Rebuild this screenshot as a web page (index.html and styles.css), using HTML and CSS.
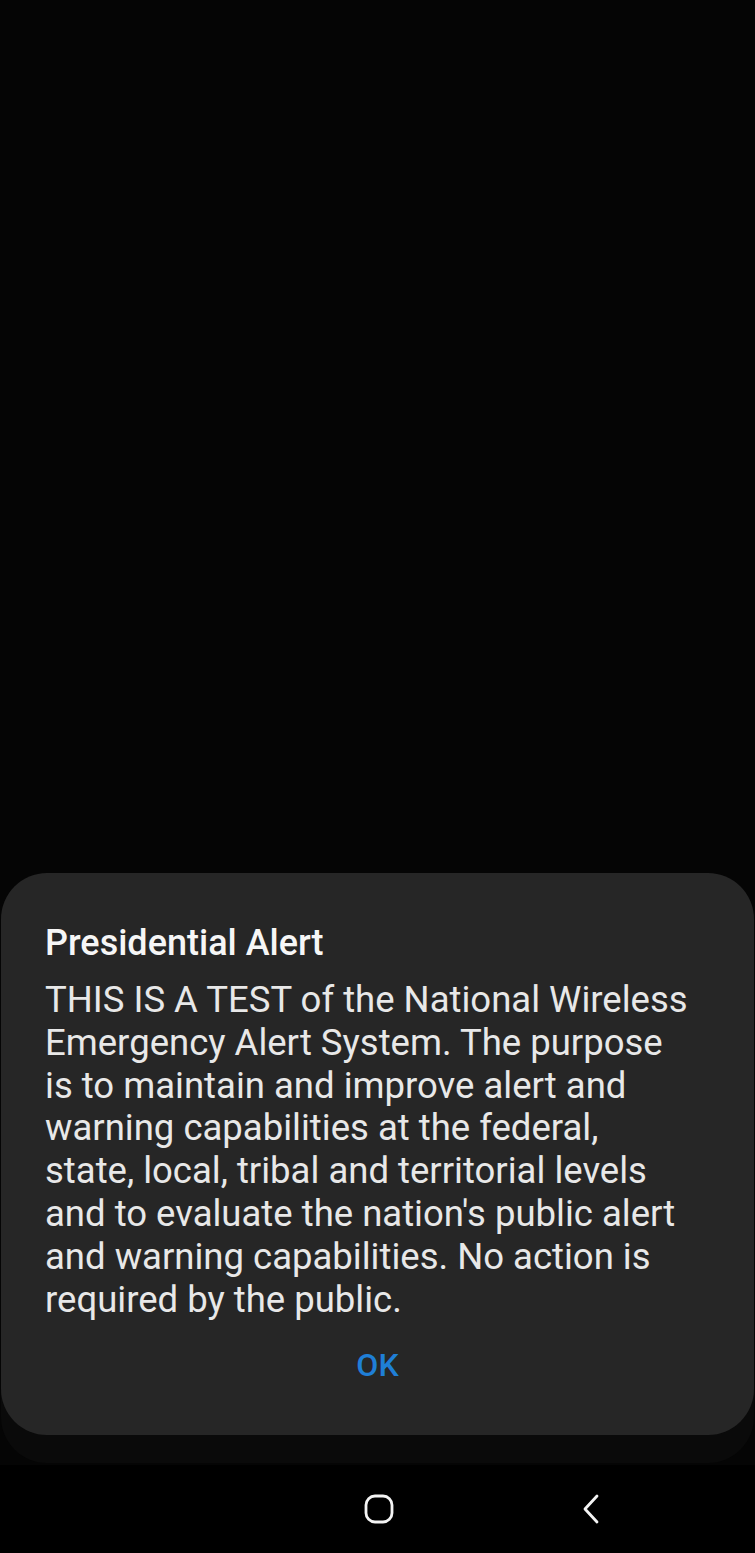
FILE: index.html
```html
<!DOCTYPE html>
<html>
<head>
<meta charset="utf-8">
<link rel="stylesheet" href="styles.css">
</head>
<body>
<div class="screen">
  <div class="spacer"></div>
  <div class="dialog">
    <div class="title">Presidential Alert</div>
    <div class="message">THIS IS A TEST of the National Wireless Emergency Alert System. The purpose is to maintain and improve alert and warning capabilities at the federal, state, local, tribal and territorial levels and to evaluate the nation's public alert and warning capabilities. No action is required by the public.</div>
    <div class="actions"><span class="ok">OK</span></div>
  </div>
  <div class="navbar">
    <div class="nav-slot"></div>
    <div class="nav-slot">
      <svg width="30" height="30" viewBox="0 0 30 30"><rect x="2" y="2" width="26" height="26" rx="9" fill="none" stroke="#f4f4f4" stroke-width="2.8"/></svg>
    </div>
    <div class="nav-slot">
      <svg width="18" height="30" viewBox="0 0 18 30"><path d="M15 2 L3 15 L15 28" fill="none" stroke="#f4f4f4" stroke-width="2.8" stroke-linecap="round" stroke-linejoin="round"/></svg>
    </div>
  </div>
</div>
</body>
</html>
```
FILE: styles.css
```css
html, body {
  margin: 0;
  padding: 0;
  background: #050505;
}
.screen {
  width: 755px;
  height: 1553px;
  display: flex;
  flex-direction: column;
  font-family: Roboto, "Noto Sans", sans-serif;
}
.spacer {
  flex: 1;
}
.dialog {
  margin: 0 1px;
  background: #262626;
  border-radius: 46px;
  padding: 49px 60px 50px 44px;
  box-shadow: 0 28px 0 0 #0a0a0a;
}
.title {
  color: #f6f6f6;
  font-size: 36px;
  font-weight: 500;
  line-height: 42px;
}
.message {
  color: #e8e8e8;
  font-size: 36.5px;
  line-height: 42.8px;
  margin-top: 14.6px;
}
.actions {
  display: flex;
  justify-content: center;
  margin-top: 23.6px;
  padding-left: 16px;
}
.ok {
  color: #1f7fd6;
  font-size: 32px;
  font-weight: 500;
  line-height: 40px;
}
.navbar {
  height: 88px;
  margin-top: 30px;
  background: #000;
  display: grid;
  grid-template-columns: 212px 212px 212px;
  justify-content: center;
  align-items: center;
  padding-left: 2px;
}
.nav-slot {
  display: flex;
  justify-content: center;
  align-items: center;
}
```
